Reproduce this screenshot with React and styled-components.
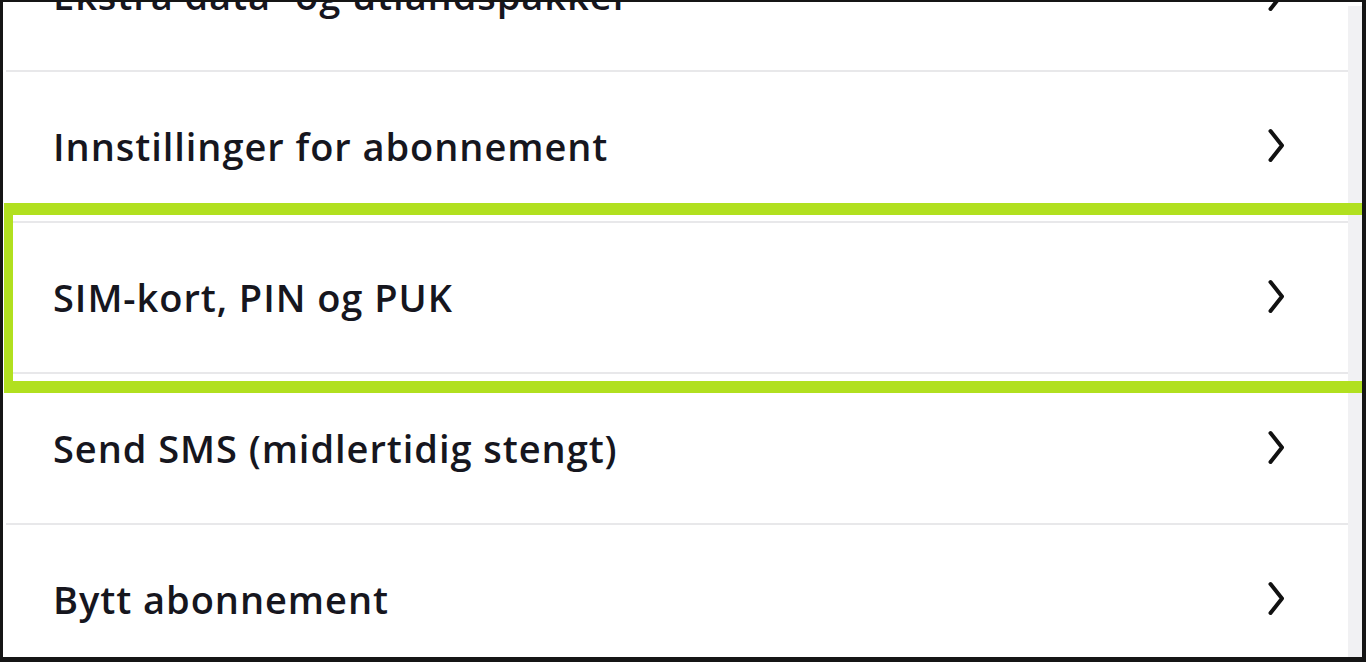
import React from 'react';
import styled, { createGlobalStyle } from 'styled-components';

const GlobalStyle = createGlobalStyle`
  body {
    margin: 0;
    font-family: "Open Sans", "Noto Sans", sans-serif;
    background: #ffffff;
  }
`;

const Frame = styled.div`
  box-sizing: border-box;
  width: 1366px;
  height: 662px;
  display: flex;
  overflow: hidden;
  background: #ffffff;
  border-style: solid;
  border-color: #151515;
  border-width: 2px 4px 5px 3px;
`;

const Menu = styled.ul`
  flex: 1;
  list-style: none;
  margin: -81px 0 0 3px;
  padding: 0;
`;

const ScrollTrack = styled.div`
  width: 14px;
  margin-top: 4px;
  background: #f1f1f3;
`;

const Row = styled.li`
  position: relative;
  box-sizing: border-box;
  height: 151px;
  display: flex;
  align-items: center;
  justify-content: space-between;
  padding: 0 63px 2px 47px;
  border-bottom: 2px solid #e8e8ea;
  color: #16161e;
  cursor: pointer;

  ${({ $highlight }) =>
    $highlight &&
    `
    &::after {
      content: '';
      position: absolute;
      top: -20px;
      bottom: -21px;
      left: -2px;
      right: -40px;
      border-style: solid;
      border-color: #b1e01f;
      border-width: 12px 12px 12px 9px;
      z-index: 1;
      pointer-events: none;
    }
  `}
`;

const Label = styled.span`
  font-size: 38px;
  line-height: 1;
  font-weight: 550;
  letter-spacing: 0.95px;
`;

const Chevron = () => (
  <svg width="18" height="35" viewBox="0 0 18 35" fill="none">
    <path
      d="M3.5 3 L15 17.5 L3.5 32"
      stroke="#111"
      strokeWidth="4"
      strokeLinecap="round"
      strokeLinejoin="round"
    />
  </svg>
);

const items = [
  { label: 'Ekstra data- og utlandspakker' },
  { label: 'Innstillinger for abonnement' },
  { label: 'SIM-kort, PIN og PUK', highlight: true },
  { label: 'Send SMS (midlertidig stengt)' },
  { label: 'Bytt abonnement' },
];

function App() {
  return (
    <>
      <GlobalStyle />
      <Frame>
        <Menu>
          {items.map((item) => (
            <Row key={item.label} $highlight={item.highlight}>
              <Label>{item.label}</Label>
              <Chevron />
            </Row>
          ))}
        </Menu>
        <ScrollTrack />
      </Frame>
    </>
  );
}

export default App;
